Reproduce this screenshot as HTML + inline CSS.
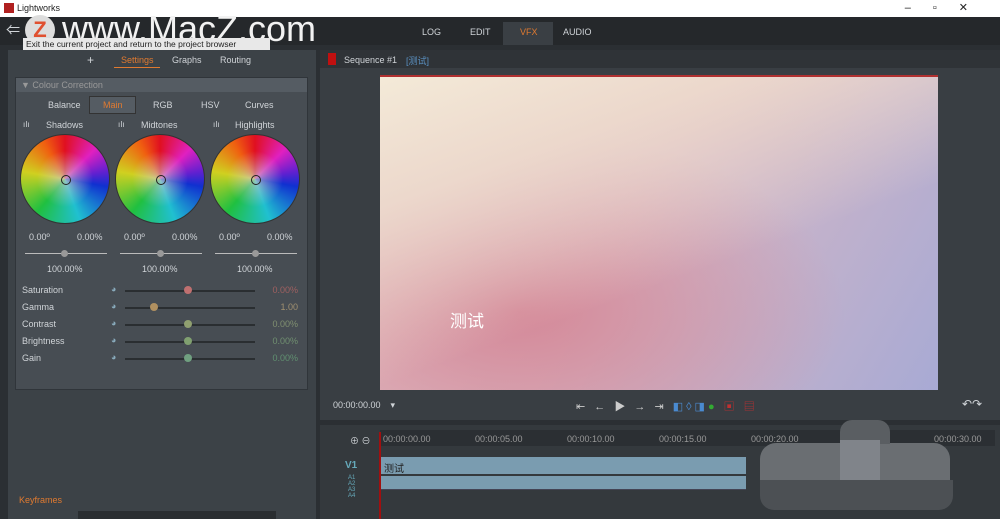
<!DOCTYPE html><html><head><meta charset="utf-8"><style>
*{margin:0;padding:0;box-sizing:border-box}
body{width:1000px;height:519px;overflow:hidden;background:#2b2f33;font-family:"Liberation Sans","Noto Sans CJK SC",sans-serif;font-size:9px;color:#d0d4d8;position:relative}
.a{position:absolute}
.wheel{position:absolute;width:90px;height:90px;border-radius:50%;border:1px solid #333;background:radial-gradient(circle,rgba(200,200,200,.7) 0,rgba(200,200,200,0) 45%),conic-gradient(from 0deg,#e01020,#e020c0 45deg,#6020d0 80deg,#1030d0 100deg,#20c0d0 160deg,#20c040 220deg,#d0d020 280deg,#f06010 330deg,#e01020)}
.wheel:after{content:"";position:absolute;left:40px;top:40px;width:8px;height:8px;border:1px solid #222;border-radius:50%}
.row{position:absolute;left:22px;width:280px;height:17px}
.sl{position:absolute;left:103px;width:130px;top:8px;height:2px;background:#2a2e31}
.kn{position:absolute;top:4px;width:8px;height:8px;border-radius:50%}
</style></head><body>
<div class="a" style="left:0;top:0;width:1000px;height:17px;background:#fff;color:#222;font-size:9px"><div class="a" style="left:4px;top:3px;width:10px;height:10px;background:#b02020"></div><span class="a" style="left:17px;top:3px">Lightworks</span><span class="a" style="right:10px;top:1px;font-size:11px;letter-spacing:22px">–▫✕</span></div>
<div class="a" style="left:0;top:17px;width:1000px;height:28px;background:#25282b"></div>
<div class="a" style="left:503px;top:22px;width:50px;height:23px;background:#3a3f44"></div>
<span class="a" style="left:422px;top:27px">LOG</span><span class="a" style="left:470px;top:27px">EDIT</span><span class="a" style="left:520px;top:27px;color:#e07a30">VFX</span><span class="a" style="left:563px;top:27px">AUDIO</span>
<span class="a" style="left:6px;top:20px;font-size:14px">⇐</span>
<div class="a" style="left:25px;top:15px;width:30px;height:30px;border-radius:50%;background:#ddd;color:#e05030;font-size:22px;font-weight:bold;text-align:center;line-height:30px">Z</div>
<span class="a" style="left:62px;top:8px;font-size:36px;color:#f2f2f2">www.MacZ.com</span>
<div class="a" style="left:23px;top:38px;width:247px;height:12px;background:#e8e8e8;color:#222;font-size:8.5px;padding-left:3px;line-height:12px">Exit the current project and return to the project browser</div>
<div class="a" style="left:8px;top:50px;width:308px;height:469px;background:#3c4247"></div>
<span class="a" style="left:87px;top:53px;font-size:12px">+</span>
<span class="a" style="left:121px;top:55px;color:#e07a30">Settings</span><div class="a" style="left:114px;top:67px;width:46px;height:1px;background:#e07a30"></div>
<span class="a" style="left:172px;top:55px">Graphs</span><span class="a" style="left:220px;top:55px">Routing</span>
<div class="a" style="left:15px;top:77px;width:293px;height:313px;background:#474d53;border:1px solid #30353a"></div>
<div class="a" style="left:16px;top:78px;width:291px;height:14px;background:#555c63"></div>
<span class="a" style="left:21px;top:80px;color:#999">▼ Colour Correction</span>
<div class="a" style="left:89px;top:96px;width:47px;height:18px;background:#555c63;border:1px solid #333"></div>
<span class="a" style="left:48px;top:100px">Balance</span><span class="a" style="left:103px;top:100px;color:#e07a30">Main</span><span class="a" style="left:153px;top:100px">RGB</span><span class="a" style="left:201px;top:100px">HSV</span><span class="a" style="left:245px;top:100px">Curves</span>
<span class="a" style="left:23px;top:120px;font-size:8px">ıIı</span><span class="a" style="left:46px;top:120px">Shadows</span>
<span class="a" style="left:118px;top:120px;font-size:8px">ıIı</span><span class="a" style="left:141px;top:120px">Midtones</span>
<span class="a" style="left:213px;top:120px;font-size:8px">ıIı</span><span class="a" style="left:235px;top:120px">Highlights</span>
<div class="wheel" style="left:20px;top:134px"></div><div class="wheel" style="left:115px;top:134px"></div><div class="wheel" style="left:210px;top:134px"></div>
<span class="a" style="left:29px;top:232px">0.00º</span><span class="a" style="left:77px;top:232px">0.00%</span>
<span class="a" style="left:124px;top:232px">0.00º</span><span class="a" style="left:172px;top:232px">0.00%</span>
<span class="a" style="left:219px;top:232px">0.00º</span><span class="a" style="left:267px;top:232px">0.00%</span>
<div class="a" style="left:25px;top:253px;width:82px;height:1px;background:#bbb"></div><div class="a" style="left:61px;top:250px;width:7px;height:7px;border-radius:50%;background:#999"></div>
<div class="a" style="left:120px;top:253px;width:82px;height:1px;background:#bbb"></div><div class="a" style="left:157px;top:250px;width:7px;height:7px;border-radius:50%;background:#999"></div>
<div class="a" style="left:215px;top:253px;width:82px;height:1px;background:#bbb"></div><div class="a" style="left:252px;top:250px;width:7px;height:7px;border-radius:50%;background:#999"></div>
<span class="a" style="left:47px;top:264px">100.00%</span><span class="a" style="left:142px;top:264px">100.00%</span><span class="a" style="left:237px;top:264px">100.00%</span>
<div class="row" style="top:282px"><span class="a" style="top:3px">Saturation</span><span class="a" style="left:89px;top:2px;color:#8ab">◕</span><div class="sl"></div><div class="kn" style="left:162px;background:#c07070"></div><span class="a" style="right:4px;top:3px;color:#a06060">0.00%</span></div>
<div class="row" style="top:299px"><span class="a" style="top:3px">Gamma</span><span class="a" style="left:89px;top:2px;color:#8ab">◕</span><div class="sl"></div><div class="kn" style="left:128px;background:#b09060"></div><span class="a" style="right:4px;top:3px;color:#a09070">1.00</span></div>
<div class="row" style="top:316px"><span class="a" style="top:3px">Contrast</span><span class="a" style="left:89px;top:2px;color:#8ab">◕</span><div class="sl"></div><div class="kn" style="left:162px;background:#90a070"></div><span class="a" style="right:4px;top:3px;color:#809070">0.00%</span></div>
<div class="row" style="top:333px"><span class="a" style="top:3px">Brightness</span><span class="a" style="left:89px;top:2px;color:#8ab">◕</span><div class="sl"></div><div class="kn" style="left:162px;background:#80a070"></div><span class="a" style="right:4px;top:3px;color:#709070">0.00%</span></div>
<div class="row" style="top:350px"><span class="a" style="top:3px">Gain</span><span class="a" style="left:89px;top:2px;color:#8ab">◕</span><div class="sl"></div><div class="kn" style="left:162px;background:#70a080"></div><span class="a" style="right:4px;top:3px;color:#609070">0.00%</span></div>
<span class="a" style="left:19px;top:495px;color:#e07a30">Keyframes</span>
<div class="a" style="left:78px;top:511px;width:198px;height:8px;background:#2a2e31"></div>
<div class="a" style="left:320px;top:50px;width:680px;height:370px;background:#393e43"></div>
<div class="a" style="left:320px;top:50px;width:680px;height:18px;background:#2f3337"></div>
<div class="a" style="left:328px;top:53px;width:8px;height:12px;background:#c01010"></div>
<span class="a" style="left:344px;top:55px">Sequence #1</span><span class="a" style="left:406px;top:54px;color:#5a90c0">[测试]</span>
<div class="a" style="left:380px;top:75px;width:558px;height:315px;background:linear-gradient(160deg,#f4ead8 0%,#ecd8cc 25%,rgba(0,0,0,0) 60%),radial-gradient(ellipse at 25% 75%,#d48898 0%,rgba(212,136,152,0) 55%),linear-gradient(120deg,#e8c0c0 0%,#d8b8c4 45%,#a8aad4 100%);border-top:2px solid #b03030"></div>
<span class="a" style="left:450px;top:307px;font-size:17px;color:#fff">测试</span>
<span class="a" style="left:333px;top:400px">00:00:00.00 &nbsp;&nbsp; ▾</span>
<span class="a" style="left:576px;top:398px;font-size:11px;color:#ccc;letter-spacing:3px">⇤ ← ▶ → ⇥ <span style="color:#4a8ad0">◧◊◨</span><span style="color:#3a3">●</span> <span style="color:#c03030">▣ ▤</span></span>
<span class="a" style="left:962px;top:397px;font-size:12px">↶↷</span>
<div class="a" style="left:320px;top:425px;width:680px;height:94px;background:#34393d"></div>
<div class="a" style="left:380px;top:430px;width:615px;height:16px;background:#2b2f33"></div>
<span class="a" style="left:350px;top:434px">⊕ ⊖</span>
<span class="a" style="left:383px;top:434px;color:#999">00:00:00.00</span><span class="a" style="left:475px;top:434px;color:#999">00:00:05.00</span><span class="a" style="left:567px;top:434px;color:#999">00:00:10.00</span><span class="a" style="left:659px;top:434px;color:#999">00:00:15.00</span><span class="a" style="left:751px;top:434px;color:#999">00:00:20.00</span><span class="a" style="left:934px;top:434px;color:#999">00:00:30.00</span>
<div class="a" style="left:379px;top:432px;width:2px;height:87px;background:#a01010"></div>
<span class="a" style="left:345px;top:460px;color:#6ab;font-weight:bold;font-size:10px">V1</span>
<span class="a" style="left:348px;top:475px;color:#6ab;font-size:6px;line-height:6px">A1<br>A2<br>A3<br>A4</span>
<div class="a" style="left:381px;top:457px;width:365px;height:17px;background:#7a9cb0"></div>
<span class="a" style="left:384px;top:460px;color:#222;font-size:10px">测试</span>
<div class="a" style="left:381px;top:476px;width:365px;height:14px;background:#7a9cb0;border-bottom:1px solid #445"></div>
<div class="a" style="left:760px;top:443px;width:190px;height:37px;background:#6a6e72;border-radius:16px 16px 0 0"></div>
<div class="a" style="left:760px;top:480px;width:193px;height:30px;background:#4c5054;border-radius:0 0 14px 14px"></div>
<div class="a" style="left:840px;top:420px;width:50px;height:24px;background:#5a5e62;border-radius:12px 12px 0 0"></div>
<div class="a" style="left:840px;top:440px;width:40px;height:40px;background:#80848a"></div>
</body></html>
